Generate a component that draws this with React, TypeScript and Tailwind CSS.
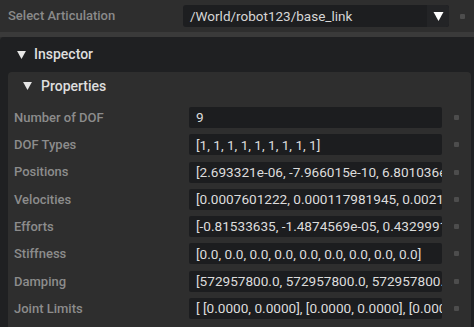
import React from 'react';

const rows: { label: string; value: string }[] = [
  { label: 'Number of DOF', value: '9' },
  { label: 'DOF Types', value: '[1, 1, 1, 1, 1, 1, 1, 1, 1]' },
  { label: 'Positions', value: '[2.693321e-06, -7.966015e-10, 6.801036e-05, 0.0001]' },
  { label: 'Velocities', value: '[0.0007601222, 0.000117981945, 0.0021893]' },
  { label: 'Efforts', value: '[-0.81533635, -1.4874569e-05, 0.43299916]' },
  { label: 'Stiffness', value: '[0.0, 0.0, 0.0, 0.0, 0.0, 0.0, 0.0, 0.0, 0.0]' },
  { label: 'Damping', value: '[572957800.0, 572957800.0, 572957800.0]' },
  { label: 'Joint Limits', value: '[ [0.0000, 0.0000], [0.0000, 0.0000], [0.0000, 0.0000]]' },
];

const Dot = () => <div className="w-[5px] h-[5px] bg-[#4d4d4d] rounded-[1px]" />;

const Tri = ({ className }: { className: string }) => (
  <svg viewBox="0 0 10 9" className={className}>
    <path d="M0 0 L10 0 L5 9 Z" fill="currentColor" />
  </svg>
);

export default function App() {
  return (
    <div className="w-[474px] h-[327px] overflow-hidden bg-[#2e2e2e] font-['Roboto',sans-serif] flex flex-col">
      {/* articulation picker */}
      <div className="h-[32px] flex items-center pl-[8px] shrink-0">
        <span className="w-[175px] text-[13px] font-medium text-[#8a8a8a]">Select Articulation</span>
        <div className="w-[266px] h-[22px] bg-[#1d1e20] rounded-[3px] flex items-center">
          <span className="flex-1 pl-[7px] text-[13.5px] text-[#d6d6d6]">/World/robot123/base_link</span>
          <div className="w-[22px] h-full bg-[#232426] rounded-r-[3px] flex items-center justify-center">
            <Tri className="w-[11px] h-[9px] text-white" />
          </div>
        </div>
        <div className="flex-1 flex justify-center pl-[2px]">
          <Dot />
        </div>
      </div>
      <div className="h-[5px] bg-[#3a3a3a] shrink-0" />

      {/* inspector */}
      <div className="flex-1 bg-[#1f2022] rounded-tl-[4px] flex flex-col">
        <div className="h-[35px] flex items-center pl-[17px] gap-[8px] shrink-0">
          <Tri className="w-[9px] h-[8px] text-[#e6e6e6]" />
          <span className="text-[14px] font-medium text-[#dedede]">Inspector</span>
        </div>
        <div className="flex-1 ml-[8px] mr-[3px] bg-[#2e2e2e] rounded-t-[4px] flex flex-col">
          <div className="h-[28px] flex items-center pl-[15px] gap-[9px] shrink-0">
            <Tri className="w-[9px] h-[8px] text-[#e6e6e6]" />
            <span className="text-[14px] font-medium text-[#dedede]">Properties</span>
          </div>
          <div className="flex flex-col gap-[6.3px] pt-[7px]">
            {rows.map((r) => (
              <div key={r.label} className="h-[21px] flex items-center">
                <span className="w-[181px] pl-[6px] text-[13px] font-medium text-[#8c8c8c]">{r.label}</span>
                <div className="w-[253px] h-full bg-[#1c1d1f] rounded-[2px] overflow-hidden flex items-center pl-[7px]">
                  <span className="text-[13.6px] text-[#dcdcdc] whitespace-nowrap">{r.value}</span>
                </div>
                <div className="flex-1 flex justify-center">
                  <Dot />
                </div>
              </div>
            ))}
          </div>
        </div>
      </div>
    </div>
  );
}
